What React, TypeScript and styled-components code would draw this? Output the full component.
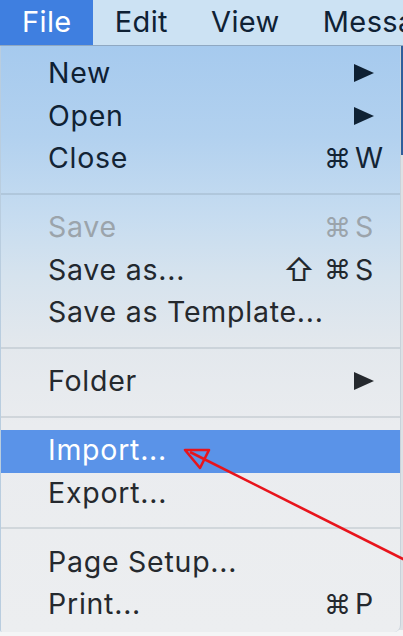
import React from "react";
import styled, { createGlobalStyle } from "styled-components";

const Global = createGlobalStyle`
  html, body {
    margin: 0;
    padding: 0;
    width: 403px;
    height: 636px;
    overflow: hidden;
    background: linear-gradient(180deg, #cde3f3 0 46px, #2f5e9c 46px 155px, #dde1e5 155px 630px, #f4f5f6 630px);
  }
  * { box-sizing: border-box; }
`;

const Page = styled.div`
  position: relative;
  width: 403px;
  height: 636px;
  overflow: hidden;
  font-family: Inter, "Noto Sans", "Liberation Sans", sans-serif;
  -webkit-font-smoothing: antialiased;
`;

const MenuBar = styled.div`
  display: flex;
  height: 46px;
  background: #cce2f3;
  border-bottom: 1px solid #8fa8c2;
  overflow: hidden;
  white-space: nowrap;
`;

const BarItem = styled.div<{ $active?: boolean }>`
  display: flex;
  align-items: center;
  flex-shrink: 0;
  padding: 0 21px 2px 22px;
  height: 45px;
  font-size: 29px;
  letter-spacing: 0.4px;
  color: ${(p) => (p.$active ? "#ffffff" : "#0f2134")};
  background: ${(p) => (p.$active ? "#3f7fe0" : "transparent")};
`;

const Dropdown = styled.div`
  width: 401px;
  padding: 7px 0 5px 0;
  border-left: 1px solid #b9cddf;
  border-right: 1px solid #c9d2da;
  border-bottom-right-radius: 7px;
  border-bottom-left-radius: 2px;
  background: linear-gradient(
    180deg,
    #a6caee 0px,
    #b2d1ef 90px,
    #c6dcf0 170px,
    #d6e3ee 230px,
    #e3e8ed 300px,
    #eaecef 380px,
    #eceef0 100%
  );
`;

const Row = styled.div<{ $selected?: boolean; $disabled?: boolean; $tone?: string }>`
  display: grid;
  grid-template-columns: 1fr 110px;
  align-items: center;
  height: 42.5px;
  padding: 0 11px 0 47px;
  font-size: 28.5px;
  letter-spacing: 0.75px;
  background: ${(p) => (p.$selected ? "#5a93e8" : "transparent")};
  color: ${(p) =>
    p.$selected ? "#ffffff" : p.$disabled ? "#9ba4ab" : p.$tone || "#25292e"};
`;

const Label = styled.span`
  white-space: nowrap;
  line-height: 1;
  padding-bottom: 2px;
`;

const Shortcut = styled.span`
  display: grid;
  grid-template-columns: 1fr 34px;
  column-gap: 4px;
  align-items: center;
  line-height: 1;
  padding-bottom: 2px;
`;

const Mods = styled.span`
  display: flex;
  justify-content: flex-end;
  align-items: center;
  gap: 9px;
  white-space: nowrap;
`;

const Mod = styled.span<{ $size: number }>`
  font-size: ${(p) => p.$size}px;
  letter-spacing: 0;
  line-height: 1;
`;

const Key = styled.span`
  text-align: left;
  display: flex;
  align-items: center;
  letter-spacing: 0;
`;

const Separator = styled.div`
  height: 26.5px;
  display: flex;
  align-items: center;
  &::after {
    content: "";
    display: block;
    width: 100%;
    height: 2px;
    background: rgba(120, 135, 150, 0.22);
  }
`;

const Annotation = styled.svg`
  position: absolute;
  left: 0;
  top: 0;
  pointer-events: none;
`;

const SubArrow = ({ color }: { color: string }) => (
  <svg width="22" height="20" viewBox="0 0 22 20" style={{ marginLeft: -2 }}>
    <polygon points="1,1 21,10 1,19" fill={color} />
  </svg>
);

type Item =
  | { sep: true }
  | {
      sep?: false;
      label: string;
      mods?: string[];
      key?: string;
      sub?: boolean;
      disabled?: boolean;
      selected?: boolean;
      tone?: string;
    };

const items: Item[] = [
  { label: "New", sub: true, tone: "#0e2033" },
  { label: "Open", sub: true, tone: "#0f2234" },
  { label: "Close", mods: ["⌘"], key: "W", tone: "#132435" },
  { sep: true },
  { label: "Save", mods: ["⌘"], key: "S", disabled: true },
  { label: "Save as...", mods: ["⇧", "⌘"], key: "S", tone: "#22282e" },
  { label: "Save as Template...", tone: "#25292d" },
  { sep: true },
  { label: "Folder", sub: true },
  { sep: true },
  { label: "Import...", selected: true },
  { label: "Export..." },
  { sep: true },
  { label: "Page Setup..." },
  { label: "Print...", mods: ["⌘"], key: "P" },
];

export default function App() {
  return (
    <Page>
      <Global />
      <MenuBar>
        <BarItem $active>File</BarItem>
        <BarItem>Edit</BarItem>
        <BarItem>View</BarItem>
        <BarItem>Message</BarItem>
      </MenuBar>
      <Dropdown>
        {items.map((it, i) =>
          it.sep ? (
            <Separator key={i} />
          ) : (
            <Row
              key={i}
              $selected={it.selected}
              $disabled={it.disabled}
              $tone={it.tone}
            >
              <Label>{it.label}</Label>
              <Shortcut>
                <Mods>
                  {(it.mods ?? []).map((m, j) => (
                    <Mod key={j} $size={m === "⇧" ? 31 : 27}>
                      {m}
                    </Mod>
                  ))}
                </Mods>
                <Key>
                  {it.sub ? <SubArrow color={it.tone || "#25292e"} /> : it.key ?? ""}
                </Key>
              </Shortcut>
            </Row>
          )
        )}
      </Dropdown>
      <Annotation width="403" height="636" viewBox="0 0 403 636">
        <polygon
          points="185,450 209,450 200,468"
          fill="none"
          stroke="#e8141c"
          strokeWidth="2.6"
          strokeLinejoin="round"
        />
        <line x1="190" y1="452" x2="405" y2="560" stroke="#e8141c" strokeWidth="2.6" />
      </Annotation>
    </Page>
  );
}
